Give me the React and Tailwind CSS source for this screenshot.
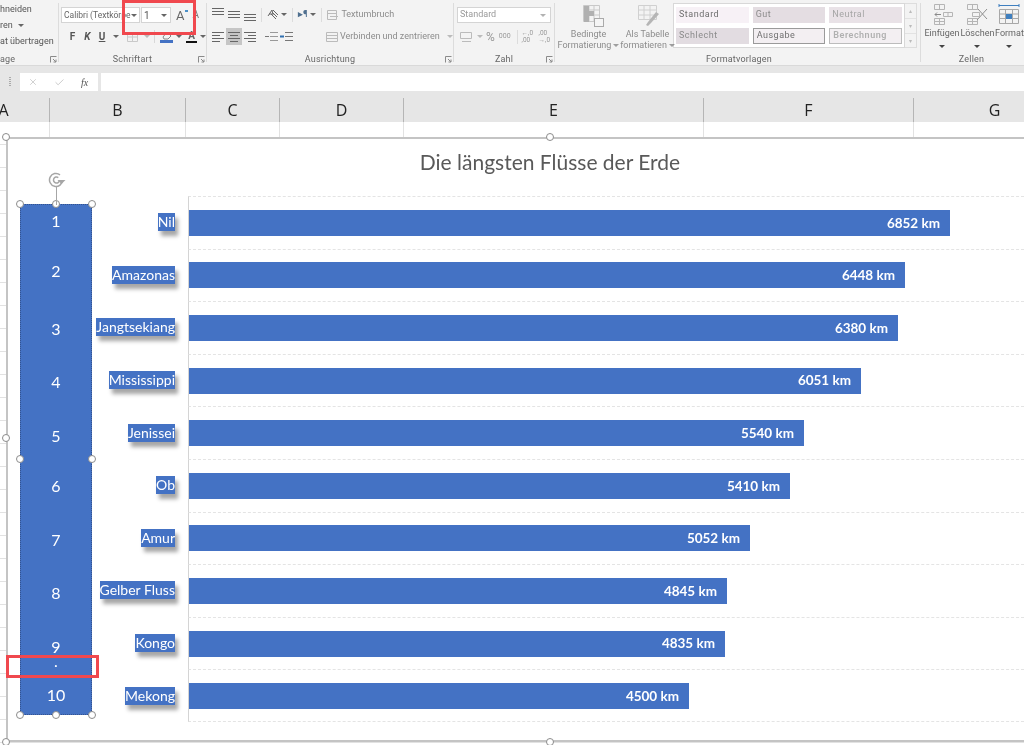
import { Check, X } from "lucide-react";

const rivers = [
  ["Nil", 761, "6852 km"],
  ["Amazonas", 716, "6448 km"],
  ["Jangtsekiang", 709, "6380 km"],
  ["Mississippi", 672, "6051 km"],
  ["Jenissei", 615, "5540 km"],
  ["Ob", 601, "5410 km"],
  ["Amur", 561, "5052 km"],
  ["Gelber Fluss", 538, "4845 km"],
  ["Kongo", 536, "4835 km"],
  ["Mekong", 500, "4500 km"],
];

const columns = [
  ["A", 92],
  ["B", 136],
  ["C", 94],
  ["D", 124],
  ["E", 300],
  ["F", 210],
  ["G", 162],
];

const numbers = [
  ["1", 6],
  ["2", 30],
  ["3", 38],
  ["4", 33],
  ["5", 34],
  ["6", 30],
  ["7", 34],
  ["8", 33],
  ["9", 34],
  [".", 0],
  ["10", 20],
];

const styles = [
  ["Standard", "bg-[#f7f1f6]", "text-[#6f6f6f]"],
  ["Gut", "bg-[#e4dde2]", "text-[#8b8b8b]"],
  ["Neutral", "bg-[#e9e2e7]", "text-[#a5a5a5]"],
  ["Schlecht", "bg-[#e2dce1]", "text-[#8b8b8b]"],
  ["Ausgabe", "bg-[#f3eff2] border border-[#9a9a9a]", "text-[#707070]"],
  ["Berechnung", "bg-[#f3eff2] border border-[#bcbcbc]", "text-[#b0b0b0] font-semibold"],
];

const Caret = ({ className = "" }) => (
  <span className={`inline-block h-0 w-0 border-x-[3px] border-t-[3px] border-x-transparent border-t-[#666] ${className}`} />
);

const Lines = ({ widths, active, className = "" }) => (
  <span className={`flex w-4 h-[17px] flex-col justify-center gap-[2px] ${active ? "bg-[#c6c6c6]" : ""} ${className}`}>
    {widths.map((w, i) => (
      <svg key={i} width="14" height="1" className="mx-auto">
        <rect x={w[0]} width={w[1]} height="1" fill="#666" />
      </svg>
    ))}
  </span>
);

const Launcher = () => (
  <svg width="7" height="7" className="absolute right-[1px] bottom-[2px]">
    <path d="M.5 6.5v-6h6M3 3l3 3M6 3.5V6H3.5" fill="none" stroke="#8a8a8a" strokeWidth="1" />
  </svg>
);

const Sep = () => <div className="mt-[3px] h-[59px] w-px bg-[#dcdcdc]" />;

const Group = ({ label, width, launcher, children }) => (
  <div className="relative flex h-full shrink-0 flex-col" style={{ width }}>
    <div className="h-[53px]">{children}</div>
    <div className="h-[12px] text-center text-[9px] leading-[12px] tracking-[0.2px] text-[#666]">{label}</div>
    {launcher && <Launcher />}
  </div>
);

function Clipboard() {
  return (
    <Group label={<span className="block pr-[44px]">age</span>} width={58} launcher>
      <div className="flex flex-col gap-[4px] pt-[3px] text-[9px] leading-[12px] text-[#555]">
        <span>hneiden</span>
        <span className="flex items-center gap-[5px]">ren <Caret /></span>
        <span>at übertragen</span>
      </div>
    </Group>
  );
}

function Font() {
  return (
    <Group label="Schriftart" width={147} launcher>
      <div className="flex items-center pl-[2px] pt-[7px]">
        <div className="flex h-[16px] w-[79px] items-center justify-between border border-[#d4d4d4] bg-white pl-[2px] pr-[3px] text-[8.5px] text-[#666]">
          <span className="whitespace-nowrap">Calibri (Textkörpe</span>
          <Caret className="shrink-0" />
        </div>
        <div className="ml-[1px] flex h-[16px] w-[30px] items-center justify-between border border-[#d4d4d4] bg-white pl-[2px] pr-[3px] text-[10px] text-[#555]">
          <span>1</span>
          <Caret />
        </div>
        <span className="ml-[5px] text-[13px] leading-none text-[#666]">A</span>
        <span className="ml-[1px] mb-[8px] h-[2px] w-[3px] bg-[#4a90c8]" />
        <span className="ml-[4px] text-[10px] leading-none text-[#777]">A</span>
      </div>
      <div className="mt-[5px] flex h-[17px] items-center pl-[6px] text-[10px] font-bold text-[#555]">
        <span className="w-[15px] text-center">F</span>
        <span className="w-[15px] text-center italic">K</span>
        <span className="w-[15px] text-center underline">U</span>
        <Caret className="ml-[4px]" />
        <svg width="14" height="12" className="ml-[7px]" fill="none" stroke="#c9c9c9">
          <path d="M1.5 1.5h10v9h-10zM6.5 1.5v9M1.5 6h10" />
        </svg>
        <Caret className="ml-[4px] opacity-40" />
        <div className="ml-[4px] h-[13px] w-px bg-[#d8d8d8]" />
        <svg width="14" height="13" className="ml-[5px]" fill="none">
          <path d="M3 7l4-5 4 4-3 3H4z" stroke="#888" />
          <rect y="10" width="13" height="3" fill="#4472c4" />
        </svg>
        <Caret className="ml-[2px]" />
        <span className="ml-[4px] w-[11px] border-b-2 border-[#111] text-center leading-[11px] text-[#666]">A</span>
        <Caret className="ml-[3px]" />
      </div>
    </Group>
  );
}

function Alignment() {
  return (
    <Group label="Ausrichtung" width={246} launcher>
      <div className="mt-[6px] flex h-[17px] items-center pl-[3px]">
        <Lines widths={[[1, 12], [1, 12], [1, 12]]} className="!justify-start pt-[2px]" />
        <Lines widths={[[1, 12], [1, 12], [1, 12]]} />
        <Lines widths={[[1, 12], [1, 12], [1, 12]]} className="!justify-end pb-[2px]" />
        <div className="ml-[3px] h-[14px] w-px bg-[#dcdcdc]" />
        <svg width="13" height="13" className="ml-[4px]" fill="none" stroke="#666">
          <path d="M2 8l4-6 1 5M3 6h3M7 2l5 5M6 4l5 5M5 6l5 5" />
        </svg>
        <Caret className="ml-[2px]" />
        <div className="ml-[5px] h-[14px] w-px bg-[#dcdcdc]" />
        <span className="ml-[5px] text-[9px] font-bold leading-none text-[#4f6f8f]">▸¶</span>
        <Caret className="ml-[3px]" />
        <div className="ml-[5px] h-[14px] w-px bg-[#dcdcdc]" />
        <svg width="14" height="12" className="ml-[4px]" fill="none" stroke="#bbb">
          <path d="M1.5 1.5h9v9h-9zM1.5 4.5h9M4 7.5h8" />
        </svg>
        <span className="ml-[1px] text-[9px] text-[#8c8c8c]">Textumbruch</span>
      </div>
      <div className="mt-[5px] flex h-[17px] items-center pl-[3px]">
        <Lines widths={[[1, 12], [1, 8], [1, 12], [1, 8]]} />
        <Lines widths={[[1, 12], [3, 8], [1, 12], [3, 8]]} active />
        <Lines widths={[[1, 12], [5, 8], [1, 12], [5, 8]]} />
        <svg width="14" height="11" className="ml-[6px]" fill="none" stroke="#999">
          <path d="M6 1.5h8M6 5.5h8M6 9.5h8" />
          <path d="M5 5.5H1" stroke="#777" />
        </svg>
        <svg width="14" height="11" className="ml-[1px]" fill="none" stroke="#777">
          <path d="M6 1.5h8M6 5.5h8M6 9.5h8" />
          <path d="M1 5.5h4" stroke="#2f6fb0" strokeWidth="2" />
        </svg>
        <svg width="14" height="12" className="ml-[32px]" fill="none" stroke="#bbb">
          <path d="M1.5 1.5h11v9h-11zM1.5 4.5h11M1.5 7.5h11" />
        </svg>
        <span className="ml-[1px] whitespace-nowrap text-[9px] text-[#8c8c8c]">Verbinden und zentrieren</span>
        <Caret className="ml-[7px] opacity-40" />
      </div>
    </Group>
  );
}

function Numbers() {
  return (
    <Group label="Zahl" width={100} launcher>
      <div className="pl-[3px] pt-[7px]">
        <div className="flex h-[16px] w-[94px] items-center justify-between border border-[#d4d4d4] bg-white pl-[2px] pr-[4px] text-[9px] text-[#999]">
          Standard <Caret className="opacity-50" />
        </div>
      </div>
      <div className="mt-[5px] flex h-[17px] items-center pl-[5px] text-[#999]">
        <svg width="15" height="12" fill="none" stroke="#bbb">
          <path d="M1.5 1.5h11v6h-11zM3 10.5h9" />
        </svg>
        <Caret className="ml-[3px] opacity-40" />
        <span className="ml-[3px] text-[12px] leading-none">%</span>
        <span className="ml-[4px] text-[7px] leading-none">000</span>
        <div className="ml-[6px] h-[14px] w-px bg-[#dcdcdc]" />
        <span className="ml-[4px] w-[14px] text-[6.5px] leading-[7px]">←,0<br />,00</span>
        <span className="ml-[3px] w-[14px] text-[6.5px] leading-[7px]">,00<br />→,0</span>
      </div>
    </Group>
  );
}

function StyleGallery() {
  return (
    <Group label={<span className="block pl-[3px]">Formatvorlagen</span>} width={365}>
      <div className="flex h-full">
        <div className="flex w-[118px] text-center text-[9px] leading-[11px] text-[#8c8c8c]">
          <div className="flex w-[67px] flex-col items-center pt-[4px]">
            <svg width="24" height="24" className="ml-[9px]" fill="none" stroke="#c9c9c9">
              <path d="M2.5 1.5h16v16h-16zM2.5 6h16M2.5 11h16M8 1.5v16M13 1.5v16" />
              <path d="M3 2h5v16h-5zM8 7h5v5h-5z" fill="#b0b0b0" stroke="none" />
              <rect x="13.5" y="14.5" width="9" height="8" fill="#f5f5f5" stroke="#aaa" />
            </svg>
            <span className="mt-[1px] whitespace-nowrap">Bedingte</span>
            <span className="flex items-center gap-[2px] whitespace-nowrap">Formatierung <Caret className="opacity-60" /></span>
          </div>
          <div className="flex w-[51px] flex-col items-center pt-[4px]">
            <svg width="24" height="24" fill="none" stroke="#d0d0d0">
              <path d="M2.5 1.5h18v14h-18zM2.5 6h18M2.5 11h18M8 1.5v14M14 1.5v14" />
              <path d="M20 8l3 2-8 9-3 3-2-1 2-3z" fill="#b5b5b5" stroke="none" />
            </svg>
            <span className="mt-[1px] whitespace-nowrap">Als Tabelle</span>
            <span className="flex items-center gap-[2px] whitespace-nowrap">formatieren <Caret className="opacity-60" /></span>
          </div>
        </div>
        <div className="flex h-[45px] pt-[3px]">
          <div className="grid h-[45px] w-[232px] grid-cols-3 gap-x-[4px] gap-y-[4px] border border-[#d8d8d8] bg-white px-[2px] py-[3px]">
            {styles.map(([name, bg, text]) => (
              <div key={name} className={`flex h-[16px] items-center pl-[3px] text-[9px] tracking-[0.5px] ${bg} ${text}`}>
                {name}
              </div>
            ))}
          </div>
          <div className="flex h-[45px] w-[12px] flex-col border border-l-0 border-[#dddddd] text-center">
            <span className="flex-1 border-b border-[#e2e2e2] text-[6px] leading-[14px] text-[#bbb]">▴</span>
            <span className="flex-1 border-b border-[#e2e2e2] text-[6px] leading-[14px] text-[#bbb]">▾</span>
            <span className="flex-1 text-[6px] leading-[14px] text-[#bbb]">▾</span>
          </div>
        </div>
      </div>
    </Group>
  );
}

const InsertIcon = () => (
  <svg width="26" height="23" fill="none" stroke="#b5b5b5">
    <path d="M5.5 1.5h10v5h-10zM10.5 1.5v5M5.5 15.5h10v6h-10zM5.5 18.5h10M10.5 15.5v6" />
    <path d="M14.5 9.5h9v4h-9zM19 9.5v4" />
    <path d="M12 11.5H6M8 9.5l-2 2 2 2" stroke="#8a8a8a" />
  </svg>
);

const DeleteIcon = () => (
  <svg width="26" height="23" fill="none" stroke="#b5b5b5">
    <path d="M3.5 1.5h10v5h-10zM8.5 1.5v5M3.5 15.5h10v6h-10zM3.5 18.5h10M8.5 15.5v6M8.5 9.5h7v4h-7z" />
    <path d="M14 6l9 10M23 6L13 17" stroke="#8f8f8f" />
  </svg>
);

const FormatIcon = () => (
  <svg width="26" height="23" fill="none" stroke="#a8a8a8">
    <path d="M3 2.5h20M3 1v3M23 1v3" stroke="#3f7fbf" />
    <path d="M3.5 6.5h19v14h-19zM3.5 11h19M3.5 15.5h19M9.5 6.5v14M16.5 6.5v14" />
    <rect x="10" y="11" width="6" height="5" fill="#3f7fbf" stroke="none" />
  </svg>
);

function Cells() {
  const items = [
    ["Einfügen", "w-[37px]", <InsertIcon key="a" />],
    ["Löschen", "w-[36px]", <DeleteIcon key="b" />],
    ["Format", "w-[30px]", <FormatIcon key="c" />],
  ];
  return (
    <Group label={<span className="block pr-[2px]">Zellen</span>} width={103}>
      <div className="flex pl-[3px] pt-[3px] text-[9px] leading-[11px] text-[#666]">
        {items.map(([name, w, icon]) => (
          <div key={name} className={`flex flex-col items-center ${w}`}>
            {icon}
            <span className="mt-[2px] whitespace-nowrap">{name}</span>
            <Caret className="mt-[6px] !border-t-[#444]" />
          </div>
        ))}
      </div>
    </Group>
  );
}

function Ribbon() {
  return (
    <div className="flex h-[65px] bg-[#f3f3f3] font-['Roboto',sans-serif]">
      <Clipboard />
      <Sep />
      <Font />
      <Sep />
      <Alignment />
      <Sep />
      <Numbers />
      <Sep />
      <StyleGallery />
      <Sep />
      <Cells />
    </div>
  );
}

function FormulaBar() {
  return (
    <div className="flex h-[33px] items-start border-t border-[#d9d9d9] bg-[#e6e6e6] pt-[7px]">
      <span className="ml-[9px] mt-[4px] h-[9px] w-[2px] border-x border-dotted border-[#aaa]" />
      <div className="ml-[9px] flex h-[18px] w-[78px] items-center bg-white pl-[8px] text-[#b5b5b5]">
        <X size={10} strokeWidth={1.5} />
        <Check size={11} strokeWidth={1.5} className="ml-[16px]" />
        <span className="ml-[16px] font-['Liberation_Serif',serif] text-[10px] italic text-[#555]">fx</span>
      </div>
      <div className="ml-[3px] h-[18px] flex-1 bg-white" />
    </div>
  );
}

function ColumnHeaders() {
  return (
    <div className="ml-[-42px] flex h-[24px] bg-[#e6e6e6] text-[16px] leading-[24px] text-[#222]">
      {columns.map(([name, w]) => (
        <div key={name} className="shrink-0 border-r border-[#b5b5b5] text-center" style={{ width: w }}>
          {name}
        </div>
      ))}
    </div>
  );
}

function Sheet() {
  return (
    <div className="ml-[-42px] flex flex-col bg-white">
      {Array.from({ length: 27 }).map((_, i) => (
        <div key={i} className="flex h-[23px] shrink-0 border-b border-[#e2e2e2]">
          {columns.map(([name, w]) => (
            <div key={name} className="shrink-0 border-r border-[#e2e2e2]" style={{ width: w }} />
          ))}
        </div>
      ))}
    </div>
  );
}

const Handle = ({ className }) => (
  <span className={`absolute h-[8px] w-[8px] rounded-full border border-[#8c8c8c] bg-white ${className}`} />
);

const RotateHandle = () => (
  <svg width="18" height="18" viewBox="0 0 18 18" fill="none" stroke="#a6a6a6" className="absolute left-[27px] top-[-34px]">
    <path d="M14.5 9a6.5 6.5 0 1 1-2.5-5.2" strokeWidth="1.5" />
    <path d="M11.5 9a3 3 0 1 1-1.2-2.4" strokeWidth="1.5" />
    <path d="M9.5 9h8l-4 4z" fill="#a6a6a6" stroke="none" />
  </svg>
);

function NumberBox() {
  return (
    <div className="absolute left-[12px] top-[65px] h-[511px] w-[72px] border border-dotted border-[#34538f] bg-[#4472c4] text-center text-[16px] leading-[20px] text-white">
      {numbers.map(([n, gap]) => (
        <div key={n} className={n === "." ? "leading-[8px]" : ""} style={{ marginTop: gap }}>
          {n}
        </div>
      ))}
      <Handle className="left-[-5px] top-[-5px]" />
      <Handle className="left-[31px] top-[-5px]" />
      <Handle className="right-[-5px] top-[-5px]" />
      <Handle className="left-[-5px] top-[250px]" />
      <Handle className="right-[-5px] top-[250px]" />
      <Handle className="bottom-[-5px] left-[-5px]" />
      <Handle className="bottom-[-5px] left-[31px]" />
      <Handle className="bottom-[-5px] right-[-5px]" />
      <span className="absolute left-[35px] top-[-19px] h-[19px] w-px bg-[#a6a6a6]" />
      <RotateHandle />
    </div>
  );
}

function Chart() {
  return (
    <div className="absolute left-[6px] top-[137px] h-[605px] w-[1040px] border-2 border-[#c4c4c4] bg-white font-['Lato',sans-serif]">
      <div className="h-[57px] pl-[48px] pt-[9px] text-center text-[21px] leading-[28px] text-[#595959]">
        Die längsten Flüsse der Erde
      </div>
      <div className="flex flex-col">
        {rivers.map(([name, width, value], i) => (
          <div key={name} className="flex h-[52.6px] items-center">
            <div className="flex w-[167px] shrink-0 justify-end">
              <span className="bg-[#4472c4] text-[14px] leading-[18px] text-white shadow-[3px_5px_4px_rgba(0,0,0,0.35)]">
                {name}
              </span>
            </div>
            <div className={`ml-[13px] flex h-full flex-1 items-center border-l border-t border-l-[#d4d4d4] border-t-[#e4e4e4] border-dashed [border-left-style:solid] ${i === 9 ? "border-b border-b-[#e4e4e4]" : ""}`}>
              <div
                className="flex h-[26px] items-center justify-end bg-[#4472c4] pr-[10px] text-[13.5px] font-bold text-white"
                style={{ width }}
              >
                {value}
              </div>
            </div>
          </div>
        ))}
      </div>
      <NumberBox />
      <Handle className="left-[-6px] top-[-6px]" />
      <Handle className="left-[538px] top-[-6px]" />
      <Handle className="left-[-6px] top-[295px]" />
      <Handle className="bottom-[-6px] left-[-6px]" />
      <Handle className="bottom-[-6px] left-[538px]" />
    </div>
  );
}

export default function App() {
  return (
    <div className="relative h-[745px] w-[1024px] overflow-hidden bg-white font-['Open_Sans',sans-serif] blur-[0.4px]">
      <Ribbon />
      <FormulaBar />
      <ColumnHeaders />
      <Sheet />
      <Chart />
      <div className="absolute left-[122px] top-0 h-[35px] w-[74px] border-[3px] border-[#f0484e]" />
      <div className="absolute left-[6px] top-[655px] h-[23px] w-[93px] border-[3px] border-[#f0484e]" />
    </div>
  );
}
